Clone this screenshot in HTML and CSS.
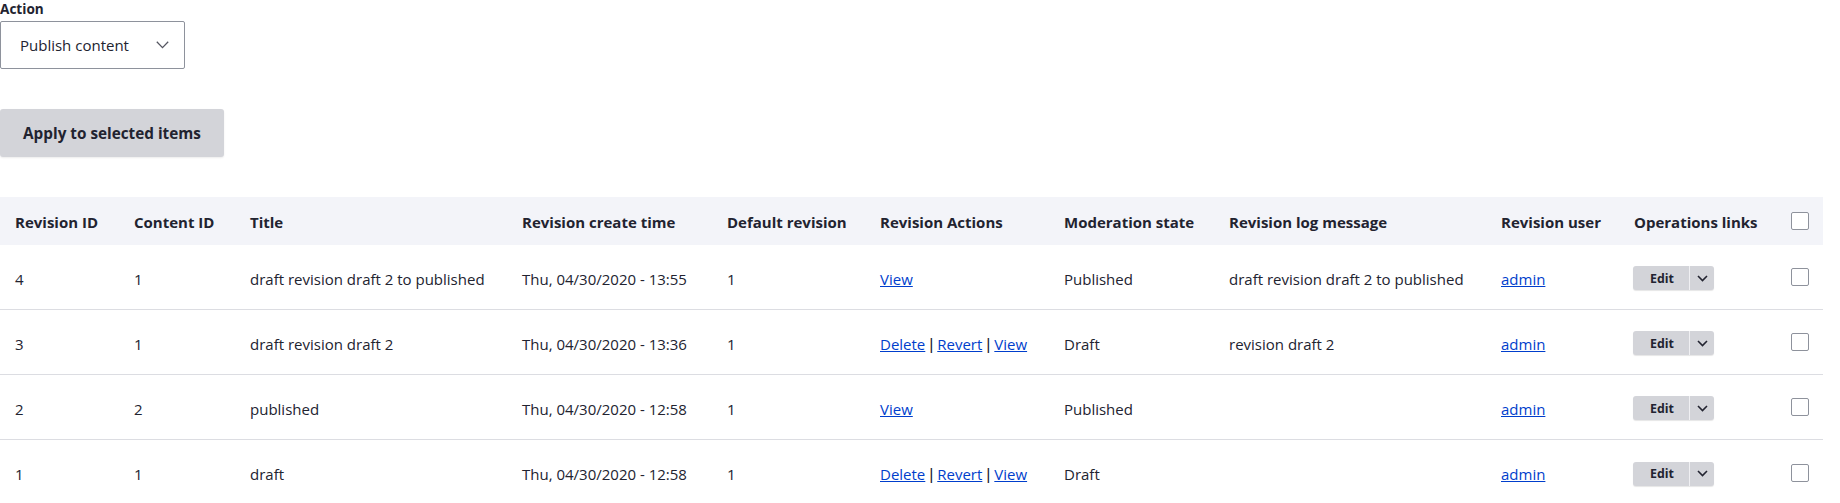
FILE: index.html
```html
<!DOCTYPE html>
<html lang="en">
<head>
<meta charset="utf-8">
<title>Revisions</title>
<link rel="stylesheet" href="styles.css">
</head>
<body>
<form class="page">
  <div class="form-item">
    <label class="label" for="action">Action</label>
    <div class="select-wrap">
      <select id="action" class="select">
        <option>Publish content</option>
      </select>
      <svg class="select-arrow" width="13" height="8" viewBox="0 0 13 8"><polyline points="0.8,0.8 6.5,6.6 12.2,0.8" fill="none" stroke="#545560" stroke-width="1.3"/></svg>
    </div>
  </div>
  <div class="actions">
    <button type="button" class="btn">Apply to selected items</button>
  </div>
  <table class="table">
    <colgroup>
      <col style="width:119px"><col style="width:116px"><col style="width:272px"><col style="width:205px"><col style="width:153px"><col style="width:184px"><col style="width:165px"><col style="width:272px"><col style="width:133px"><col style="width:157px"><col style="width:47px">
    </colgroup>
    <thead>
      <tr>
        <th>Revision ID</th>
        <th>Content ID</th>
        <th>Title</th>
        <th>Revision create time</th>
        <th>Default revision</th>
        <th>Revision Actions</th>
        <th>Moderation state</th>
        <th>Revision log message</th>
        <th>Revision user</th>
        <th>Operations links</th>
        <th class="cb-cell"><input type="checkbox" class="cb"></th>
      </tr>
    </thead>
    <tbody>
      <tr>
        <td>4</td><td>1</td><td>draft revision draft 2 to published</td><td>Thu, 04/30/2020 - 13:55</td><td>1</td>
        <td><a href="#">View</a></td>
        <td>Published</td><td>draft revision draft 2 to published</td>
        <td><a href="#">admin</a></td>
        <td class="ops"><div class="dropbutton"><a href="#" class="db-main">Edit</a><span class="db-sep"></span><button type="button" class="db-toggle"><svg width="11" height="7" viewBox="0 0 11 7"><polyline points="1,1 5.5,5.5 10,1" fill="none" stroke="#222330" stroke-width="1.6"/></svg></button></div></td>
        <td class="cb-cell"><input type="checkbox" class="cb"></td>
      </tr>
      <tr>
        <td>3</td><td>1</td><td>draft revision draft 2</td><td>Thu, 04/30/2020 - 13:36</td><td>1</td>
        <td><a href="#">Delete</a> <span class="pipe">|</span> <a href="#">Revert</a> <span class="pipe">|</span> <a href="#">View</a></td>
        <td>Draft</td><td>revision draft 2</td>
        <td><a href="#">admin</a></td>
        <td class="ops"><div class="dropbutton"><a href="#" class="db-main">Edit</a><span class="db-sep"></span><button type="button" class="db-toggle"><svg width="11" height="7" viewBox="0 0 11 7"><polyline points="1,1 5.5,5.5 10,1" fill="none" stroke="#222330" stroke-width="1.6"/></svg></button></div></td>
        <td class="cb-cell"><input type="checkbox" class="cb"></td>
      </tr>
      <tr>
        <td>2</td><td>2</td><td>published</td><td>Thu, 04/30/2020 - 12:58</td><td>1</td>
        <td><a href="#">View</a></td>
        <td>Published</td><td></td>
        <td><a href="#">admin</a></td>
        <td class="ops"><div class="dropbutton"><a href="#" class="db-main">Edit</a><span class="db-sep"></span><button type="button" class="db-toggle"><svg width="11" height="7" viewBox="0 0 11 7"><polyline points="1,1 5.5,5.5 10,1" fill="none" stroke="#222330" stroke-width="1.6"/></svg></button></div></td>
        <td class="cb-cell"><input type="checkbox" class="cb"></td>
      </tr>
      <tr>
        <td>1</td><td>1</td><td>draft</td><td>Thu, 04/30/2020 - 12:58</td><td>1</td>
        <td><a href="#">Delete</a> <span class="pipe">|</span> <a href="#">Revert</a> <span class="pipe">|</span> <a href="#">View</a></td>
        <td>Draft</td><td></td>
        <td><a href="#">admin</a></td>
        <td class="ops"><div class="dropbutton"><a href="#" class="db-main">Edit</a><span class="db-sep"></span><button type="button" class="db-toggle"><svg width="11" height="7" viewBox="0 0 11 7"><polyline points="1,1 5.5,5.5 10,1" fill="none" stroke="#222330" stroke-width="1.6"/></svg></button></div></td>
        <td class="cb-cell"><input type="checkbox" class="cb"></td>
      </tr>
    </tbody>
  </table>
</form>
</body>
</html>
```

FILE: styles.css
```css
html, body {
  margin: 0;
  padding: 0;
  background: #fff;
}
body {
  font-family: "Open Sans", "Noto Sans", sans-serif;
  font-size: 15px;
  color: #222330;
}
.page {
  margin: 0;
}
.label {
  display: block;
  font-weight: 700;
  font-size: 13.6px;
  line-height: 18px;
}
.select-wrap {
  position: relative;
  width: 185px;
  margin-top: 3px;
}
.select {
  -webkit-appearance: none;
  appearance: none;
  display: block;
  box-sizing: border-box;
  width: 185px;
  height: 48px;
  margin: 0;
  padding: 0 40px 0 19px;
  border: 1px solid #8e929c;
  border-radius: 2px;
  background: #fff;
  font-family: "Open Sans", "Noto Sans", sans-serif;
  font-size: 15px;
  color: #222330;
}
.select-arrow {
  position: absolute;
  right: 16px;
  top: 20px;
  pointer-events: none;
}
.actions {
  margin-top: 40px;
}
.btn {
  display: block;
  box-sizing: border-box;
  width: 224px;
  height: 48px;
  padding: 0;
  border: 0;
  border-radius: 3px;
  background: #d3d4d9;
  box-shadow: 0 1px 2px rgba(0, 0, 0, 0.08);
  font-family: "Open Sans", "Noto Sans", sans-serif;
  font-size: 15.3px;
  font-weight: 700;
  color: #222330;
}
.table {
  margin-top: 40px;
  width: 1823px;
  table-layout: fixed;
  border-collapse: separate;
  border-spacing: 0;
}
.table th {
  box-sizing: border-box;
  height: 48px;
  padding: 1px 0 0 15px;
  background: #f3f4f9;
  text-align: left;
  font-weight: 700;
  font-size: 15px;
  white-space: nowrap;
  vertical-align: middle;
}
.table td {
  box-sizing: border-box;
  height: 65px;
  padding: 3px 0 0 15px;
  border-bottom: 1px solid #dcdde2;
  vertical-align: middle;
  white-space: nowrap;
}
.table tbody tr:last-child td {
  border-bottom: 0;
}
.table a {
  color: #003ecc;
  text-decoration: underline;
}
.pipe {
  font-family: "Liberation Sans", sans-serif;
  font-size: 16px;
}
.table td.ops {
  padding-left: 14px;
  padding-top: 1px;
}
.table td.cb-cell,
.table th.cb-cell {
  padding-top: 0;
}
.dropbutton {
  display: inline-flex;
  align-items: stretch;
  height: 24px;
  margin-top: 1px;
  border-radius: 3px;
  background: #d3d4d9;
  box-shadow: 0 1px 1px rgba(0, 0, 0, 0.1);
  vertical-align: middle;
}
.table a.db-main {
  display: flex;
  align-items: center;
  justify-content: center;
  width: 56px;
  padding-left: 2px;
  box-sizing: border-box;
  font-size: 12.4px;
  font-weight: 700;
  color: #222330;
  text-decoration: none;
}
.db-sep {
  width: 1px;
  background: #f0f0f3;
}
.db-toggle {
  display: flex;
  align-items: center;
  justify-content: center;
  width: 24px;
  padding: 0 0 0 1px;
  border: 0;
  background: transparent;
}
.cb {
  -webkit-appearance: none;
  appearance: none;
  display: block;
  box-sizing: border-box;
  width: 18px;
  height: 18px;
  margin: 0;
  border: 1px solid #8e929c;
  border-radius: 2px;
  background: #fff;
}
```
